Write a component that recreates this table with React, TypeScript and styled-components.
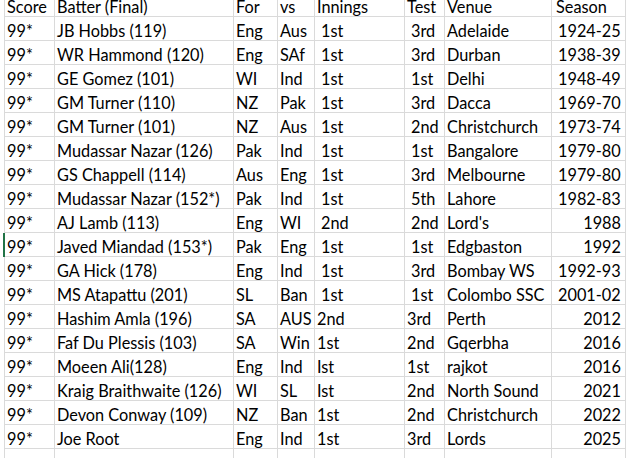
import React from "react";
import { styled, createGlobalStyle } from "styled-components";

const GlobalStyle = createGlobalStyle`
  html, body {
    margin: 0;
    padding: 0;
    background: #fff;
    overflow: hidden;
  }
  body {
    font-family: Lato, "Open Sans", sans-serif;
    color: #000;
  }
`;

// column widths, each including its right grid line
const COLS = [50, 179, 44, 37, 90, 40, 107, 74];
const GRID = "#dadada";

const Sheet = styled.div`
  margin-top: -7px;
  padding-left: 3px;
  display: flex;
  flex-direction: column;
`;

const Row = styled.div<{ $active?: boolean }>`
  display: grid;
  grid-template-columns: ${COLS.map((c) => `${c}px`).join(" ")};
  border-left: ${(p) => (p.$active ? "2px solid #217346" : "none")};
  padding-left: ${(p) => (p.$active ? "0" : "2px")};
  position: relative;
  &::before {
    content: "";
    display: ${(p) => (p.$active ? "none" : "block")};
    position: absolute;
    left: 1px;
    top: 0;
    bottom: 0;
    width: 1px;
    background: ${GRID};
  }
`;

const Cell = styled.div<{ $indent?: number; $right?: boolean }>`
  box-sizing: border-box;
  height: 24px;
  line-height: 24px;
  padding-top: 2px;
  font-size: 16.3px;
  border-right: 1px solid ${GRID};
  border-bottom: 1px solid ${GRID};
  padding-left: ${(p) => 2 + (p.$indent ?? 0)}px;
  padding-right: 4px;
  text-align: ${(p) => (p.$right ? "right" : "left")};
  white-space: nowrap;
`;

type Rec = {
  score: string;
  batter: string;
  team: string;
  vs: string;
  inn: string;
  test: string;
  venue: string;
  season: string;
  pad?: boolean;
};

const rows: Rec[] = [
  { score: "99*", batter: "JB Hobbs (119)", team: "Eng", vs: "Aus", inn: "1st", test: "3rd", venue: "Adelaide", season: "1924-25", pad: true },
  { score: "99*", batter: "WR Hammond (120)", team: "Eng", vs: "SAf", inn: "1st", test: "3rd", venue: "Durban", season: "1938-39", pad: true },
  { score: "99*", batter: "GE Gomez (101)", team: "WI", vs: "Ind", inn: "1st", test: "1st", venue: "Delhi", season: "1948-49", pad: true },
  { score: "99*", batter: "GM Turner (110)", team: "NZ", vs: "Pak", inn: "1st", test: "3rd", venue: "Dacca", season: "1969-70", pad: true },
  { score: "99*", batter: "GM Turner (101)", team: "NZ", vs: "Aus", inn: "1st", test: "2nd", venue: "Christchurch", season: "1973-74", pad: true },
  { score: "99*", batter: "Mudassar Nazar (126)", team: "Pak", vs: "Ind", inn: "1st", test: "1st", venue: "Bangalore", season: "1979-80", pad: true },
  { score: "99*", batter: "GS Chappell (114)", team: "Aus", vs: "Eng", inn: "1st", test: "3rd", venue: "Melbourne", season: "1979-80", pad: true },
  { score: "99*", batter: "Mudassar Nazar (152*)", team: "Pak", vs: "Ind", inn: "1st", test: "5th", venue: "Lahore", season: "1982-83", pad: true },
  { score: "99*", batter: "AJ Lamb (113)", team: "Eng", vs: "WI", inn: "2nd", test: "2nd", venue: "Lord's", season: "1988", pad: true },
  { score: "99*", batter: "Javed Miandad (153*)", team: "Pak", vs: "Eng", inn: "1st", test: "1st", venue: "Edgbaston", season: "1992", pad: true },
  { score: "99*", batter: "GA Hick (178)", team: "Eng", vs: "Ind", inn: "1st", test: "3rd", venue: "Bombay WS", season: "1992-93", pad: true },
  { score: "99*", batter: "MS Atapattu (201)", team: "SL", vs: "Ban", inn: "1st", test: "1st", venue: "Colombo SSC", season: "2001-02", pad: true },
  { score: "99*", batter: "Hashim Amla (196)", team: "SA", vs: "AUS", inn: "2nd", test: "3rd", venue: "Perth", season: "2012" },
  { score: "99*", batter: "Faf Du Plessis (103)", team: "SA", vs: "Win", inn: "1st", test: "2nd", venue: "Gqerbha", season: "2016" },
  { score: "99*", batter: "Moeen Ali(128)", team: "Eng", vs: "Ind", inn: "Ist", test: "1st", venue: "rajkot", season: "2016" },
  { score: "99*", batter: "Kraig Braithwaite (126)", team: "WI", vs: "SL", inn: "Ist", test: "2nd", venue: "North Sound", season: "2021" },
  { score: "99*", batter: "Devon Conway (109)", team: "NZ", vs: "Ban", inn: "1st", test: "2nd", venue: "Christchurch", season: "2022" },
  { score: "99*", batter: "Joe Root", team: "Eng", vs: "Ind", inn: "1st", test: "3rd", venue: "Lords", season: "2025" },
];

const isYear = (s: string) => /^\d{4}$/.test(s);

export default function App() {
  return (
    <>
      <GlobalStyle />
      <Sheet>
        <Row>
          <Cell>Score</Cell>
          <Cell>Batter (Final)</Cell>
          <Cell>For</Cell>
          <Cell>vs</Cell>
          <Cell>Innings</Cell>
          <Cell>Test</Cell>
          <Cell>Venue</Cell>
          <Cell $indent={2}>Season</Cell>
        </Row>
        {rows.map((r, i) => (
          <Row key={i} $active={i === 9}>
            <Cell>{r.score}</Cell>
            <Cell>{r.batter}</Cell>
            <Cell>{r.team}</Cell>
            <Cell>{r.vs}</Cell>
            <Cell $indent={r.pad ? 4 : 0}>{r.inn}</Cell>
            <Cell $indent={r.pad ? 4 : 0}>{r.test}</Cell>
            <Cell>{r.venue}</Cell>
            {isYear(r.season) ? (
              <Cell $right>{r.season}</Cell>
            ) : (
              <Cell $indent={4}>{r.season}</Cell>
            )}
          </Row>
        ))}
        <Row>
          {COLS.map((_, k) => (
            <Cell key={k} />
          ))}
        </Row>
      </Sheet>
    </>
  );
}
